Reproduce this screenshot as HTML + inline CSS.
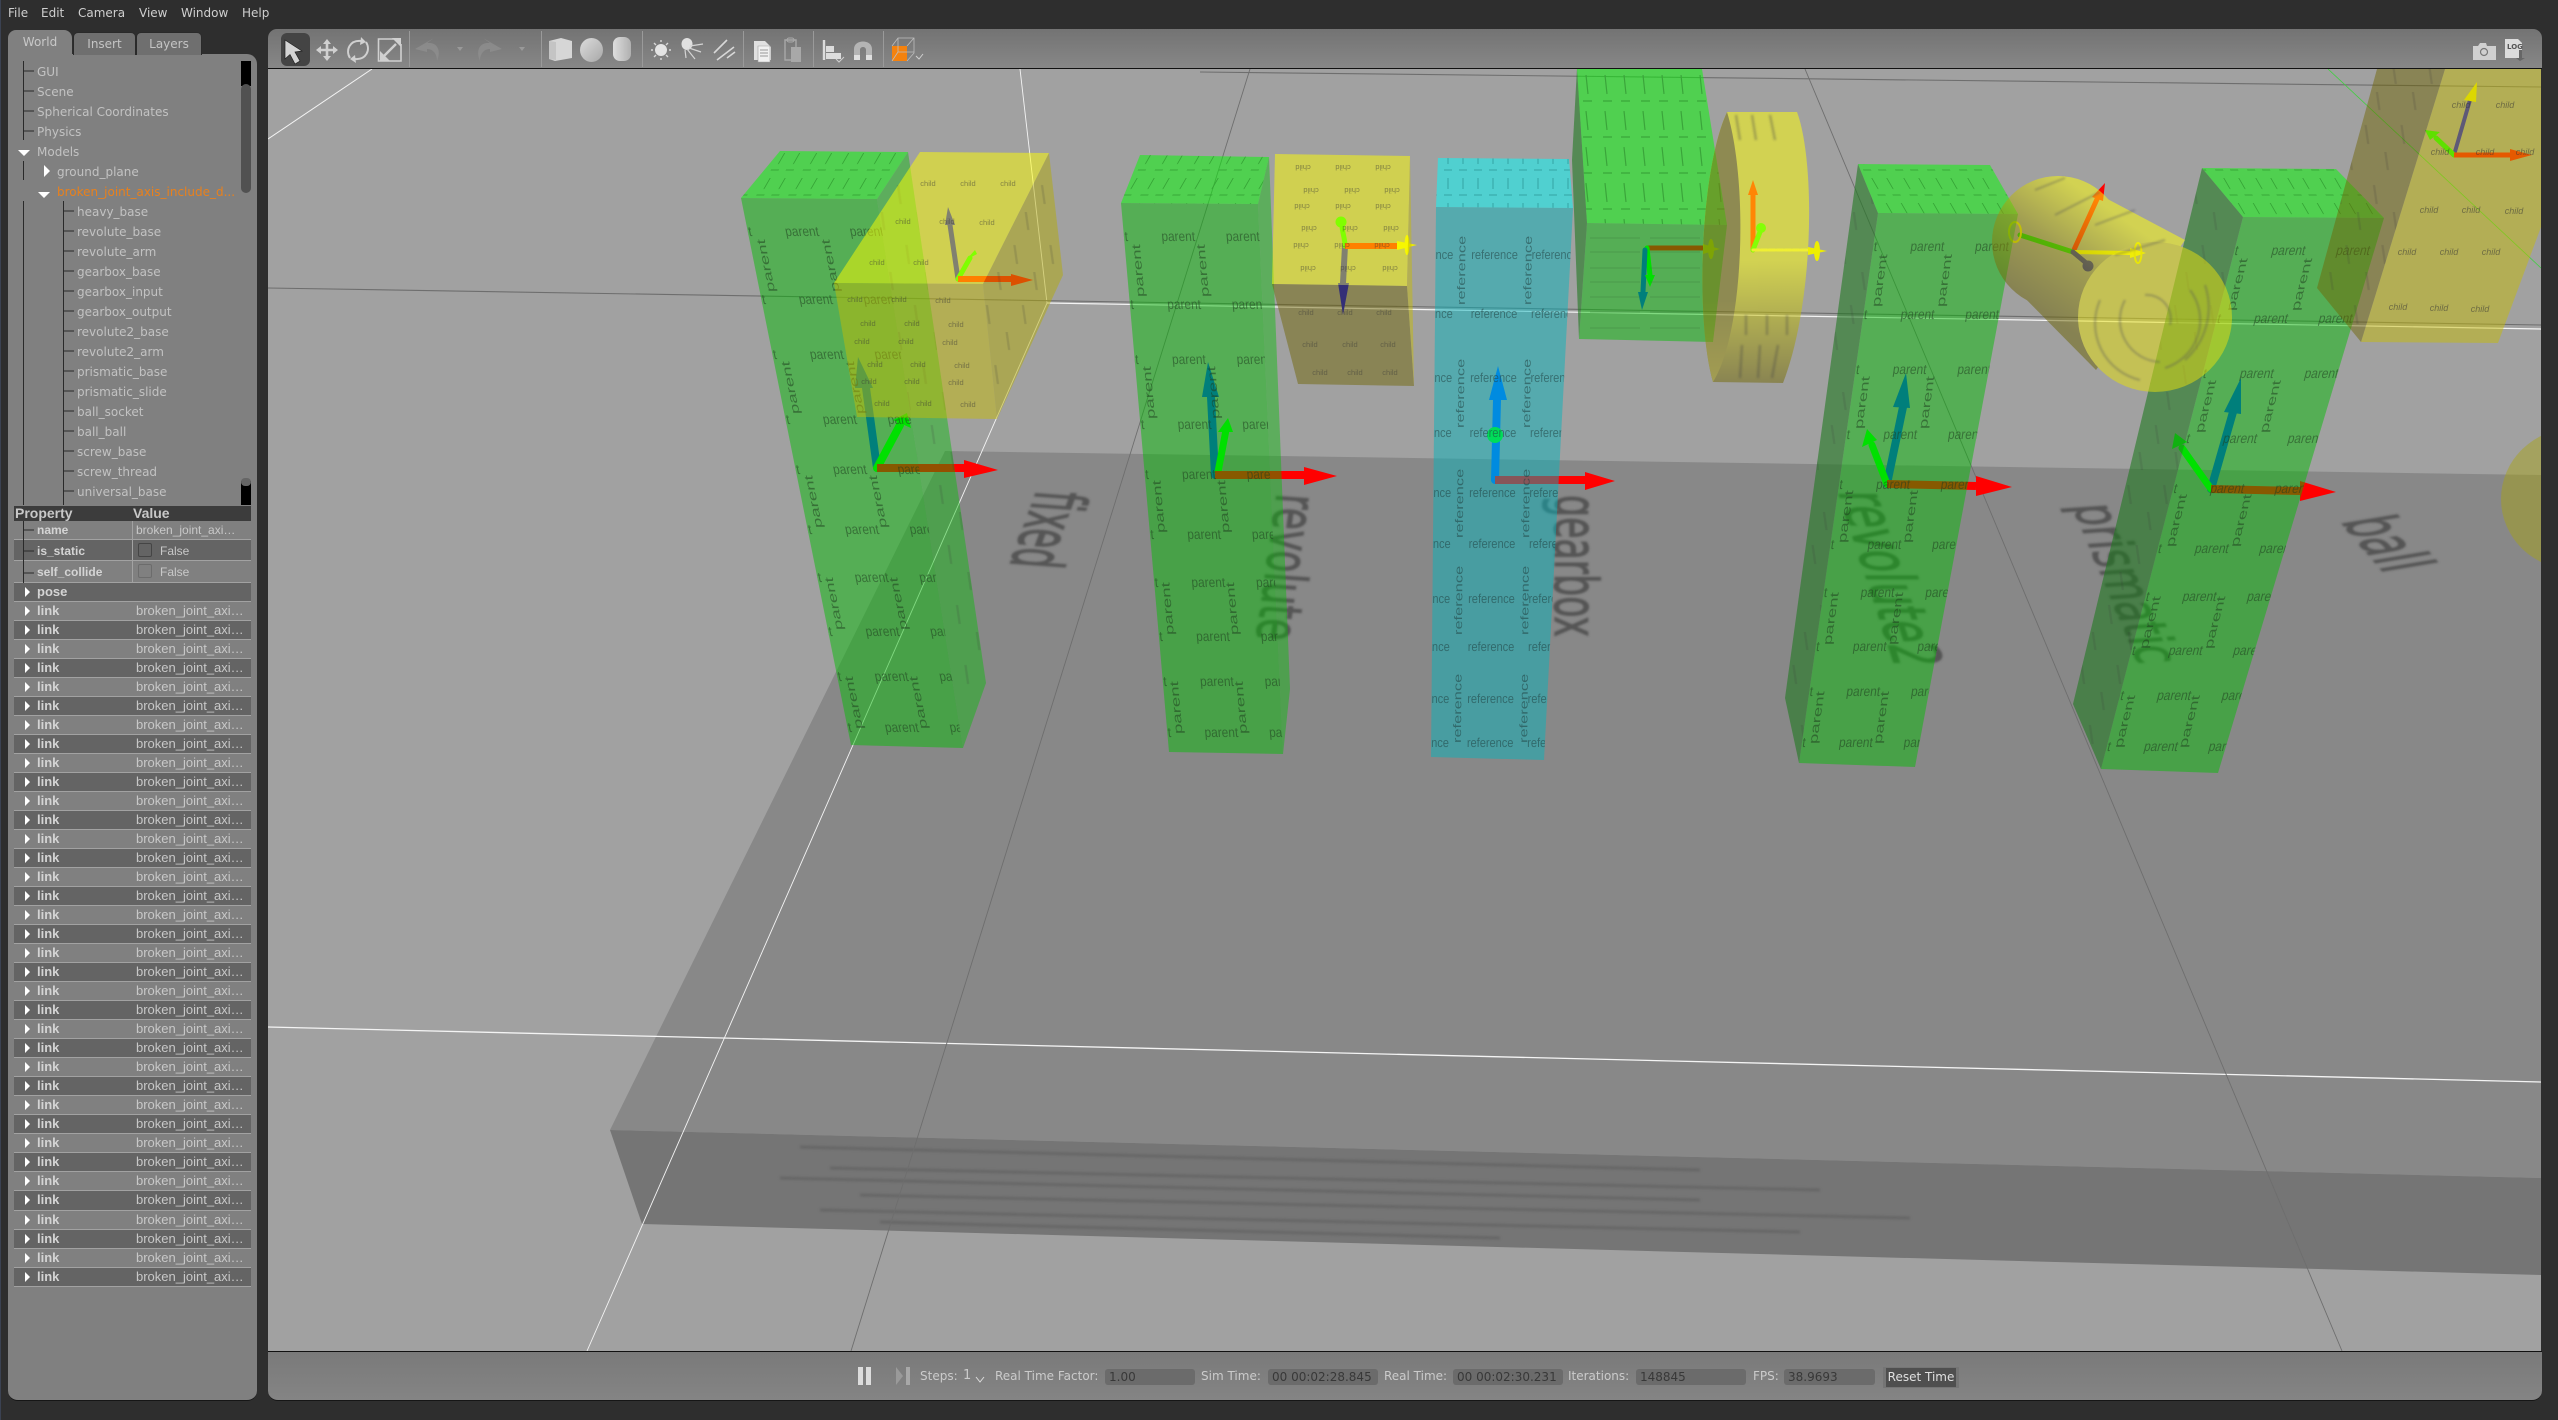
<!DOCTYPE html>
<html><head><meta charset="utf-8"><style>
html,body{margin:0;padding:0;background:#2e2e2e}
body{width:2558px;height:1420px;position:relative;overflow:hidden;font-family:"DejaVu Sans",sans-serif;font-size:12px;color:#c6c6c6}
.a{position:absolute;white-space:nowrap}
.m{top:5px;font-size:12px;color:#cfcfcf;line-height:16px}
.t{font-size:12px;line-height:16px;color:#c2c2c2;margin-top:1px}
.tab{position:absolute;top:32px;height:22px;background:#6f6f6f;border:1px solid #2a2a2a;border-bottom:none;border-radius:5px 5px 0 0;text-align:center;line-height:22px;color:#c4c4c4;font-size:12px}
.r{height:19.03px;position:relative;background:#808080;box-sizing:border-box;border-bottom:1px solid #a2a2a2;font-family:"Liberation Sans",sans-serif;font-size:13px;line-height:18px;color:#cfcfcf}
.r:nth-child(even){background:#646464}
.r b{position:absolute;left:23px;color:#d4d4d4}
.r i{position:absolute;left:122px;font-style:normal;color:#c8c8c8}
.r:before{content:"";position:absolute;left:11px;top:4px;border-left:5px solid #fff;border-top:5px solid transparent;border-bottom:5px solid transparent}
.top{position:absolute;left:14px;width:237px;box-sizing:border-box;border-bottom:1px solid #a2a2a2;font-family:"Liberation Sans",sans-serif;line-height:18px}
.top b{position:absolute;left:23px;color:#d4d4d4}
.top i{position:absolute;font-style:normal;color:#c8c8c8}
.s{font-size:12px;line-height:16px;top:1368px;color:#cbcbcb}
.b{position:absolute;top:1369px;height:16px;background:#6b6b6b;border-radius:3px;font-size:12px;line-height:16px;color:#383838;text-indent:4px}
</style></head><body>
<div class="a" style="left:0;top:0;width:1px;height:1420px;background:#3b4252"></div>
<div class="a m" style="left:8px">File</div>
<div class="a m" style="left:41px">Edit</div>
<div class="a m" style="left:78px">Camera</div>
<div class="a m" style="left:139px">View</div>
<div class="a m" style="left:181px">Window</div>
<div class="a m" style="left:242px">Help</div>

<!-- left panel -->
<div class="a" style="left:8px;top:54px;width:249px;height:1347px;background:#808080;border-radius:0 10px 10px 10px;border-bottom:1px solid #161616;box-sizing:border-box"></div>
<div class="a" style="left:8px;top:30px;width:64px;height:26px;background:#808080;border-radius:8px 8px 0 0;text-align:center;line-height:24px;color:#c8c8c8">World</div>
<div class="tab" style="left:73px;width:61px">Insert</div>
<div class="tab" style="left:136px;width:64px">Layers</div>

<svg class="a" style="left:0;top:55px" width="260" height="455" viewBox="0 55 260 455">
<g stroke="#2a2a2a" stroke-width="1" fill="none">
<path d="M23.5 61V140M23.5 71H34M23.5 91H34M23.5 111H34M23.5 131H34M23.5 161V180M23.5 201V505M63.5 201V505"/>
<path d="M63.5 211H74M63.5 231H74M63.5 251H74M63.5 271H74M63.5 291H74M63.5 311H74M63.5 331H74M63.5 351H74M63.5 371H74M63.5 391H74M63.5 411H74M63.5 431H74M63.5 451H74M63.5 471H74M63.5 491H74"/>
</g>
<path d="M18 150H30L24 156ZM38 192H50L44 198ZM44 165V177L50 171Z" fill="#fff"/>
<rect x="241" y="61" width="10" height="25" fill="#000"/>
<rect x="241" y="84" width="10" height="109" rx="5" fill="#515151"/>
<rect x="241" y="481" width="10" height="24" fill="#000"/>
<rect x="241" y="478" width="10" height="8" rx="4" fill="#666"/>
</svg>
<div class="a t" style="left:37px;top:63px">GUI</div>
<div class="a t" style="left:37px;top:83px">Scene</div>
<div class="a t" style="left:37px;top:103px">Spherical Coordinates</div>
<div class="a t" style="left:37px;top:123px">Physics</div>
<div class="a t" style="left:37px;top:143px">Models</div>
<div class="a t" style="left:57px;top:163px">ground_plane</div>
<div class="a t" style="left:57px;top:183px;color:#e8801c">broken_joint_axis_include_d...</div>
<div class="a t" style="left:77px;top:203px">heavy_base</div>
<div class="a t" style="left:77px;top:223px">revolute_base</div>
<div class="a t" style="left:77px;top:243px">revolute_arm</div>
<div class="a t" style="left:77px;top:263px">gearbox_base</div>
<div class="a t" style="left:77px;top:283px">gearbox_input</div>
<div class="a t" style="left:77px;top:303px">gearbox_output</div>
<div class="a t" style="left:77px;top:323px">revolute2_base</div>
<div class="a t" style="left:77px;top:343px">revolute2_arm</div>
<div class="a t" style="left:77px;top:363px">prismatic_base</div>
<div class="a t" style="left:77px;top:383px">prismatic_slide</div>
<div class="a t" style="left:77px;top:403px">ball_socket</div>
<div class="a t" style="left:77px;top:423px">ball_ball</div>
<div class="a t" style="left:77px;top:443px">screw_base</div>
<div class="a t" style="left:77px;top:463px">screw_thread</div>
<div class="a t" style="left:77px;top:483px">universal_base</div>

<!-- property table -->
<div class="a" style="left:14px;top:506px;width:237px;height:15px;background:#3c3c3c;font-family:'Liberation Sans',sans-serif;font-weight:bold;font-size:14px;line-height:15px;color:#c8c8c8"><span class="a" style="left:1px">Property</span><span class="a" style="left:119px">Value</span></div>
<div class="top" style="top:521px;height:19px;background:#808080"><b>name</b><i style="left:122px">broken_joint_axi…</i></div>
<div class="top" style="top:540px;height:21px;background:#646464"><b style="top:2px">is_static</b><i style="left:146px;top:2px">False</i><span class="a" style="left:124px;top:3px;width:12px;height:12px;border:1px solid #454545;border-radius:2px"></span></div>
<div class="top" style="top:561px;height:22px;background:#808080"><b style="top:2px">self_collide</b><i style="left:146px;top:2px">False</i><span class="a" style="left:124px;top:3px;width:12px;height:12px;border:1px solid #6c6c6c;border-radius:2px"></span></div>
<div class="a" style="left:132px;top:521px;width:1px;height:62px;background:#a2a2a2"></div>
<svg class="a" style="left:0;top:521px" width="40" height="62"><path d="M23.5 0V62M23.5 9H34M23.5 30H34M23.5 52H34" stroke="#2a2a2a" fill="none"/></svg>
<div class="a" style="left:14px;top:583px;width:237px;">
<div class="r" style="background:#646464"><b>pose</b></div>
</div>
<div class="a" style="left:14px;top:602px;width:237px">
<div class="r" style="background:#808080"><b>link</b><i>broken_joint_axi…</i></div>
<div class="r"><b>link</b><i>broken_joint_axi…</i></div><div class="r"><b>link</b><i>broken_joint_axi…</i></div><div class="r"><b>link</b><i>broken_joint_axi…</i></div><div class="r"><b>link</b><i>broken_joint_axi…</i></div>
<div class="r"><b>link</b><i>broken_joint_axi…</i></div><div class="r"><b>link</b><i>broken_joint_axi…</i></div><div class="r"><b>link</b><i>broken_joint_axi…</i></div><div class="r"><b>link</b><i>broken_joint_axi…</i></div><div class="r"><b>link</b><i>broken_joint_axi…</i></div>
<div class="r"><b>link</b><i>broken_joint_axi…</i></div><div class="r"><b>link</b><i>broken_joint_axi…</i></div><div class="r"><b>link</b><i>broken_joint_axi…</i></div><div class="r"><b>link</b><i>broken_joint_axi…</i></div><div class="r"><b>link</b><i>broken_joint_axi…</i></div>
<div class="r"><b>link</b><i>broken_joint_axi…</i></div><div class="r"><b>link</b><i>broken_joint_axi…</i></div><div class="r"><b>link</b><i>broken_joint_axi…</i></div><div class="r"><b>link</b><i>broken_joint_axi…</i></div><div class="r"><b>link</b><i>broken_joint_axi…</i></div>
<div class="r"><b>link</b><i>broken_joint_axi…</i></div><div class="r"><b>link</b><i>broken_joint_axi…</i></div><div class="r"><b>link</b><i>broken_joint_axi…</i></div><div class="r"><b>link</b><i>broken_joint_axi…</i></div><div class="r"><b>link</b><i>broken_joint_axi…</i></div>
<div class="r"><b>link</b><i>broken_joint_axi…</i></div><div class="r"><b>link</b><i>broken_joint_axi…</i></div><div class="r"><b>link</b><i>broken_joint_axi…</i></div><div class="r"><b>link</b><i>broken_joint_axi…</i></div><div class="r"><b>link</b><i>broken_joint_axi…</i></div>
<div class="r"><b>link</b><i>broken_joint_axi…</i></div><div class="r"><b>link</b><i>broken_joint_axi…</i></div><div class="r"><b>link</b><i>broken_joint_axi…</i></div><div class="r"><b>link</b><i>broken_joint_axi…</i></div><div class="r"><b>link</b><i>broken_joint_axi…</i></div>
<div class="r"><b>link</b><i>broken_joint_axi…</i></div>
</div>

<!-- toolbar -->
<div class="a" style="left:268px;top:29px;width:2274px;height:39px;background:linear-gradient(#737373,#878787);border-radius:9px 9px 0 0;border-bottom:1px solid #111;box-sizing:content-box"></div>
<svg class="a" style="left:268px;top:29px" width="2274" height="39" viewBox="268 29 2274 39">
<g stroke="#9a9a9a"><path d="M409.5 31V67M541.5 31V67M642.5 31V67M743.5 31V67M813.5 31V67M883.5 31V67"/></g>
<rect x="281" y="33" width="29" height="33" rx="6" fill="#444"/>
<path d="M285 40V59L290 54.5 295 64 300 61 295 52 302 51Z" fill="#d4d4d4" stroke="#222" stroke-width=".7"/>
<path d="M327 39L331 44H328.3V48.7H333V46L338 50 333 54V51.3H328.3V56H331L327 61 323 56H325.7V51.3H321V54L316 50 321 46V48.7H325.7V44H323Z" fill="#d0d0d0"/>
<g fill="none" stroke="#d0d0d0" stroke-width="2"><path d="M350 58C345 50 350 40 361 41"/><path d="M366 42C371 50 366 60 355 59"/></g>
<path d="M361 37L366 42 360 45ZM355 55L350 59 356 63Z" fill="#d0d0d0"/>
<g fill="none" stroke="#d0d0d0" stroke-width="1.6"><path d="M395 39H378.5V61H401V44"/><path d="M383 57L396 44" stroke-width="2.4"/></g>
<path d="M392 38H401V47ZM380 51V61H390Z" fill="#d0d0d0"/>
<path d="M436 39L417 50 429 53V50C436 50 439 56 439 62 444 50 438 43 429 44Z" transform="translate(-2 -1)" fill="#8f8f8f" opacity=".8"/>
<path d="M477 39L496 50 484 53V50C477 50 474 56 474 62 469 50 475 43 484 44Z" transform="translate(6 -1)" fill="#8f8f8f" opacity=".8"/>
<path d="M457 47H463L460 51ZM519 47H525L522 51Z" fill="#999"/>
<path d="M549 41L561 38 572 41V58L555 61 549 59Z" fill="#d6d6d6"/><path d="M549 41L556 42V60L549 59Z" fill="#c4c4c4"/>
<ellipse cx="591.5" cy="50" rx="11.5" ry="12" fill="url(#sp)"/>
<rect x="613" y="37" width="18" height="24" rx="7" fill="url(#cy)"/>
<circle cx="661" cy="50" r="6" fill="#e4e4e4"/>
<g stroke="#d8d8d8" stroke-width="1.4"><path d="M661 40V42M661 58V60M651 50H653M669 50H671M654 43L656 45M666 55L668 57M654 57L656 55M666 45L668 43"/></g>
<ellipse cx="687" cy="44" rx="5.5" ry="6" fill="#e0e0e0"/>
<g stroke="#d4d4d4" stroke-width="1.2"><path d="M690 46L703 44M689 48L701 52M687 49L695 59M685 50L686 58"/></g>
<g stroke="#d8d8d8" stroke-width="1.6"><path d="M714 53L727 40M717 60L734 47M727 58L735 52"/></g>
<path d="M754 41H765L771 47V60H754Z" fill="#e0e0e0"/><path d="M758 46H770V62H758Z" fill="#f0f0f0" stroke="#a0a0a0" stroke-width=".6"/><path d="M760 50H768M760 53H768M760 56H768" stroke="#999"/>
<path d="M785 40H796V60H785Z" fill="none" stroke="#a8a8a8" stroke-width="1.4"/><path d="M791 47H801V62H791Z" fill="#a8a8a8"/><rect x="787" y="38" width="7" height="4" rx="2" fill="none" stroke="#aaa"/>
<path d="M824 40V60" stroke="#dcdcdc" stroke-width="2.4"/><rect x="826" y="46" width="8" height="6" fill="#dcdcdc"/><rect x="826" y="53" width="15" height="6" fill="#dcdcdc"/>
<path d="M836 59L839 62 844 57" stroke="#d0d0d0" fill="none"/>
<path d="M854 60V49C854 39 872 39 872 49V60H866V50C866 46 860 46 860 50V60Z" fill="#b4b4b4"/><path d="M854 55H860V60H854ZM866 55H872V60H866Z" fill="#e0e0e0"/>
<rect x="892" y="46" width="15" height="15" fill="#f5820e"/>
<path d="M892 46L898 38H914V53L907 61M898 38V52L892 61M907 46L914 38M898 52H914" fill="none" stroke="#bdbdbd" stroke-width=".8"/>
<path d="M916 56L919 59 923 54" stroke="#d0d0d0" fill="none"/>
<path d="M2473 46H2478L2480 43H2486L2487 46H2496V60H2473Z" fill="#d0d0d0"/><circle cx="2484" cy="52" r="3.5" fill="none" stroke="#777" stroke-width="1.2"/>
<path d="M2505 39H2518L2522 43V58H2505Z" fill="#dcdcdc"/>
<text x="2507" y="49" font-family="'DejaVu Sans',sans-serif" font-size="7" font-weight="bold" fill="#555">LOG</text>
<path d="M2519 50V58H2516L2520 61 2525 58H2522V50Z" fill="#666"/>
</svg>

<!-- viewport -->
<svg class="a" style="left:268px;top:69px" width="2273" height="1283" viewBox="268 69 2273 1283" font-family="'Liberation Sans',sans-serif">
<defs>
<linearGradient id="sp" x1="0" y1="0" x2="1" y2="1"><stop offset="0" stop-color="#dcdcdc"/><stop offset="1" stop-color="#a8a8a8"/></linearGradient>
<linearGradient id="cy" x1="0" y1="0" x2="1" y2="0"><stop offset="0" stop-color="#dedede"/><stop offset="1" stop-color="#b0b0b0"/></linearGradient>
<linearGradient id="gc" x1="0" y1="0" x2="0" y2="1"><stop offset="0" stop-color="#ffff0a"/><stop offset=".55" stop-color="#ffff0a"/><stop offset="1" stop-color="#746a0a"/></linearGradient>
<linearGradient id="gd" x1="0" y1="0" x2="0" y2="1"><stop offset="0" stop-color="#7e760a"/><stop offset=".7" stop-color="#7e760a"/><stop offset="1" stop-color="#a49a0a"/></linearGradient>
<linearGradient id="gr" gradientUnits="userSpaceOnUse" x1="2040" y1="310" x2="2110" y2="210"><stop offset="0" stop-color="#6e660a"/><stop offset=".5" stop-color="#a09a0a"/><stop offset="1" stop-color="#ffff0a"/></linearGradient>
<pattern id="d1" width="32" height="25" patternUnits="userSpaceOnUse" patternTransform="skewX(-30)"><path d="M9 3V14M24 3V14M5 20H13M20 20H28" stroke="#36a536" stroke-width="1"/></pattern>
<pattern id="d2" width="30" height="25" patternUnits="userSpaceOnUse"><path d="M8 3V14M23 3V14M4 20H12M19 20H27" stroke="#34a5a5" stroke-width="1"/></pattern>
<pattern id="d3" width="32" height="25" patternUnits="userSpaceOnUse" patternTransform="skewX(30)"><path d="M9 3V14M24 3V14M5 20H13M20 20H28" stroke="#36a536" stroke-width="1"/></pattern>
<pattern id="d4" width="38" height="36" patternUnits="userSpaceOnUse"><path d="M9 3L11 22M28 3L30 22M7 29H16M25 29H34" stroke="#3aa53a" stroke-width="1.2"/></pattern>
<pattern id="s1" width="36" height="60" patternUnits="userSpaceOnUse" patternTransform="skewX(8)"><path d="M8 5V24M24 32V50" stroke="#333" stroke-width="2.4" opacity=".16"/></pattern>
<clipPath id="c1"><path d="M741 198L877 199 963 748 851 745Z"/></clipPath>
<clipPath id="c2"><path d="M1121 203L1258 204 1283 754 1169 752Z"/></clipPath>
<clipPath id="c3"><path d="M1436 207L1573 208 1544 760 1431 757Z"/></clipPath>
<clipPath id="c4"><path d="M1878 213L2018 214 1915 767 1799 763Z"/></clipPath>
<clipPath id="c5"><path d="M2243 217L2384 218 2218 773 2101 769Z"/></clipPath>
<filter id="bl"><feGaussianBlur stdDeviation="1"/></filter>
<filter id="bl2"><feGaussianBlur stdDeviation="1.2"/></filter>
</defs>
<rect x="268" y="69" width="2273" height="1283" fill="#a1a1a1"/>
<path d="M945 451L2541 475V1178L610 1130Z" fill="#888"/>
<path d="M610 1130L2541 1178V1275L642 1224Z" fill="#757575"/>
<g stroke="#4a4a4a" stroke-width="2.4" opacity=".4" filter="url(#bl2)"><path d="M800 1147L1700 1170M830 1168L1820 1190M780 1178L1700 1200M860 1195L1910 1218M820 1210L1800 1232M880 1222L1500 1238"/></g>
<g fill="none" stroke="#f4f4f4">
<path d="M268 1027L2541 1082" stroke-width="1.3"/><path d="M587 1351L1047 303L1020 69" stroke-width=".9"/><path d="M1047 303L2541 329" stroke-width="1.2"/><path d="M268 139L372 69" stroke-width="1"/>
</g>
<g fill="none" stroke="#6e6e6e" stroke-width=".9">
<path d="M268 288L2541 325" stroke-width="1.1"/><path d="M1200 72L2541 87" stroke-width="1.1"/>
<path d="M851 1351L1250 69"/><path d="M1805 69L2342 1351"/>
</g>
<path d="M2328 69L2541 268" stroke="#3fd03f" stroke-width=".8" fill="none"/>
<g font-family="'DejaVu Sans',sans-serif" font-size="40" fill="#555" stroke="#555" stroke-width=".8" filter="url(#bl)">
<text transform="matrix(-.283 .78 -1.8 -.13 1037 490)">fixed</text>
<text transform="matrix(-.126 .886 -1.45 -.1 1277 493)">revolute</text>
<text transform="matrix(0 .87 -1.5 0 1555 495)">gearbox</text>
<text transform="matrix(.3 .92 -1.7 0 1838 491)">revolute2</text>
<text transform="matrix(.36 .86 -1.5 .1 2072 505)">prismatic</text>
<text transform="matrix(.625 .736 -1.8 .3 2340 521)">ball</text>
</g>

<!-- axes -->
<g fill="none" stroke-linecap="round">
<path d="M877 468L866 388" stroke="#0048e8" stroke-width="8"/><path d="M877 468L900 425" stroke="#00ff00" stroke-width="8"/><path d="M877 468H965" stroke="#f00" stroke-width="8" stroke-linecap="butt"/>
<path d="M1215 475L1211 397" stroke="#0048e8" stroke-width="8"/><path d="M1218 472L1226 430" stroke="#00ff00" stroke-width="7"/><path d="M1215 475H1305" stroke="#f00" stroke-width="8" stroke-linecap="butt"/>
<path d="M1495 480L1497 400" stroke="#0066ff" stroke-width="8"/><path d="M1495 480H1585" stroke="#f00" stroke-width="8" stroke-linecap="butt"/>
<path d="M1887 484L1903 407" stroke="#0048e8" stroke-width="8"/><path d="M1887 484L1872 445" stroke="#00ff00" stroke-width="7"/><path d="M1887 484L1976 486" stroke="#f00" stroke-width="8" stroke-linecap="butt"/>
<path d="M2211 489L2233 412" stroke="#0048e8" stroke-width="8"/><path d="M2211 489L2182 448" stroke="#00ff00" stroke-width="7"/><path d="M2211 489L2300 491" stroke="#f00" stroke-width="8" stroke-linecap="butt"/>
<path d="M958 279L950 225" stroke="#0000e0" stroke-width="5"/><path d="M958 279L970 258" stroke="#00ff00" stroke-width="5"/><path d="M958 279H1015" stroke="#f00" stroke-width="6" stroke-linecap="butt"/>
<path d="M1345 246L1343 283" stroke="#0000e0" stroke-width="6"/><path d="M1345 246C1345 238 1342 232 1342 225" stroke="#00ff00" stroke-width="5"/><path d="M1345 246H1398" stroke="#f00" stroke-width="6" stroke-linecap="butt"/>
<path d="M1753 250V195" stroke="#f00" stroke-width="5"/><path d="M1753 250L1760 232" stroke="#00ff00" stroke-width="5"/><path d="M1753 250H1810" stroke="#dddd60" stroke-width="3" stroke-dasharray="6 2"/>
<path d="M1647 248H1703" stroke="#f00" stroke-width="5" stroke-linecap="butt"/><path d="M1647 248L1650 275" stroke="#00ff00" stroke-width="5"/><path d="M1645 250L1643 292" stroke="#0048e8" stroke-width="5"/>
<path d="M2073 252L2098 197" stroke="#f00" stroke-width="5"/><path d="M2073 252L2130 253" stroke="#ff0" stroke-width="4"/><path d="M2073 252L2020 235" stroke="#00d000" stroke-width="5"/><path d="M2073 252L2085 262" stroke="#1a1aa0" stroke-width="5"/>
<path d="M2454 155L2470 100" stroke="#0000e0" stroke-width="4"/><path d="M2454 155L2436 138" stroke="#00ff00" stroke-width="5"/><path d="M2454 155H2515" stroke="#f00" stroke-width="5" stroke-linecap="butt"/>
</g>
<g>
<path d="M964 460L998 470 964 478Z" fill="#f00"/><path d="M855 388H873L858 357Z" fill="#0048e8"/><path d="M893 420L911 428 907 413Z" fill="#0f0"/>
<path d="M1304 467L1337 476 1304 485Z" fill="#f00"/><path d="M1202 397H1219L1208 362Z" fill="#0048e8"/><path d="M1218 432L1233 432 1228 418Z" fill="#0f0"/>
<path d="M1585 472L1615 481 1585 490Z" fill="#f00"/><path d="M1489 400H1507L1498 366Z" fill="#0066ff"/><circle cx="1495" cy="435" r="8" fill="#0f0"/>
<path d="M1976 476L2012 487 1976 496Z" fill="#f00"/><path d="M1893 407L1910 408 1906 373Z" fill="#0048e8"/><path d="M1862 447L1877 440 1867 429Z" fill="#0f0"/>
<path d="M2300 481L2336 492 2300 501Z" fill="#f00"/><path d="M2224 412L2241 414 2241 378Z" fill="#0048e8"/><path d="M2172 449L2187 442 2175 433Z" fill="#0f0"/>
<path d="M1011 274L1033 280 1011 286Z" fill="#f00"/><path d="M945 225H955L948 207Z" fill="#0000e0"/><path d="M966 260L977 254 975 250Z" fill="#0f0"/>
<path d="M1397 241L1417 245 1397 250Z" fill="#ee0"/><ellipse cx="1407" cy="245" rx="2.5" ry="10" fill="#ee0"/><path d="M1338 283H1349L1343 315Z" fill="#0000e0"/><circle cx="1341" cy="222" r="5.5" fill="#0f0"/>
<path d="M1748 195H1758L1753 180Z" fill="#f00"/><circle cx="1761" cy="228" r="5" fill="#0f0"/><path d="M1808 247L1827 251 1808 255Z" fill="#ee0"/><ellipse cx="1817" cy="251" rx="3" ry="10" fill="#ee0"/>
<path d="M1703 244V254L1720 249Z" fill="#ee0"/><ellipse cx="1711" cy="249" rx="3" ry="10" fill="#ee0"/><path d="M1645 275H1655L1650 287Z" fill="#0f0"/><path d="M1638 292H1648L1642 310Z" fill="#0048e8"/>
<path d="M2092 197L2103 201 2105 183Z" fill="#f00"/><path d="M2130 248V258L2146 253Z" fill="#ff0"/><ellipse cx="2138" cy="253" rx="3.5" ry="10" fill="none" stroke="#ee0" stroke-width="2"/><ellipse cx="2015" cy="232" rx="6" ry="10" fill="none" stroke="#ee0" stroke-width="2"/><circle cx="2088" cy="266" r="5.5" fill="#1a1aa0"/>
<path d="M2510 149L2532 155 2510 161Z" fill="#f00"/><path d="M2464 100L2476 102 2477 82Z" fill="#ee0"/><path d="M2430 140L2440 132 2425 130Z" fill="#0f0"/>
</g>

<!-- green columns -->
<g fill="#00be00" fill-opacity=".47">
<path d="M741 198L877 199 963 748 851 745Z"/><path d="M877 199L908 152 986 683 963 748Z" fill-opacity=".42"/>
<path d="M1121 203L1258 204 1283 754 1169 752Z"/><path d="M1258 204L1269 157 1290 689 1283 754Z" fill-opacity=".42"/>
<path d="M1878 213L2018 214 1915 767 1799 763Z"/>
<path d="M2243 217L2384 218 2218 773 2101 769Z"/>
<path d="M1587 223L1727 225 1713 342 1579 339Z"/>
</g>
<g fill="#1e781e" fill-opacity=".58">
<path d="M1858 164L1878 213 1799 763 1785 698Z"/>
<path d="M2202 168L2243 217 2101 769 2073 704Z"/>
<path d="M1572 160L1577 68 1587 223 1579 339Z"/>
</g>
<g fill="#0f0" fill-opacity=".5">
<path d="M741 198L780 151 908 152 877 199Z"/><path d="M1121 203L1140 155 1269 157 1258 204Z"/>
<path d="M1878 213L1858 164 1990 165 2018 214Z"/><path d="M2243 217L2202 168 2336 169 2384 218Z"/>
<path d="M1587 223L1577 69H1702L1727 225Z"/>
</g>
<path d="M741 198L780 151 908 152 877 199Z" fill="url(#d1)"/><path d="M1121 203L1140 155 1269 157 1258 204Z" fill="url(#d1)"/>
<path d="M1878 213L1858 164 1990 165 2018 214Z" fill="url(#d3)"/><path d="M2243 217L2202 168 2336 169 2384 218Z" fill="url(#d3)"/>
<path d="M1587 223L1577 69H1702L1727 225Z" fill="url(#d4)"/>
<path d="M1858 164L1878 213 1799 763 1785 698Z" fill="url(#s1)"/><path d="M2202 168L2243 217 2101 769 2073 704Z" fill="url(#s1)"/><path d="M877 199L908 152 986 683 963 748Z" fill="url(#s1)"/>
<path d="M1436 207L1573 208 1544 760 1431 757Z" fill="#00b4be" fill-opacity=".47"/>
<path d="M1436 207L1438 158 1569 159 1573 208Z" fill="#0ff" fill-opacity=".5"/>
<path d="M1436 207L1438 158 1569 159 1573 208Z" fill="url(#d2)"/>
<g stroke="#3a7f3a" stroke-width="1" opacity=".4"><path d="M1590 238H1640M1590 252H1640M1590 268H1640M1590 282H1640M1590 297H1640M1590 312H1640M1590 328H1640M1650 238H1700M1650 252H1700M1650 268H1700M1650 282H1700M1650 297H1700M1650 312H1700M1650 328H1700"/></g>

<!-- parent text -->
<g font-size="14" fill="#1f3f1f" fill-opacity=".55">
<g clip-path="url(#c1)"><g transform="matrix(.85 0 .201 1 741 198)">
<text y="38"><tspan x="-35">parent</tspan><tspan x="44">parent</tspan><tspan x="120">parent</tspan></text><text y="106"><tspan x="-35">parent</tspan><tspan x="44">parent</tspan><tspan x="120">parent</tspan></text><text y="161"><tspan x="-35">parent</tspan><tspan x="44">parent</tspan><tspan x="120">parent</tspan></text><text y="226"><tspan x="-35">parent</tspan><tspan x="44">parent</tspan><tspan x="120">parent</tspan></text><text y="276"><tspan x="-35">parent</tspan><tspan x="44">parent</tspan><tspan x="120">parent</tspan></text><text y="336"><tspan x="-35">parent</tspan><tspan x="44">parent</tspan><tspan x="120">parent</tspan></text><text y="384"><tspan x="-35">parent</tspan><tspan x="44">parent</tspan><tspan x="120">parent</tspan></text><text y="438"><tspan x="-35">parent</tspan><tspan x="44">parent</tspan><tspan x="120">parent</tspan></text><text y="483"><tspan x="-35">parent</tspan><tspan x="44">parent</tspan><tspan x="120">parent</tspan></text><text y="534"><tspan x="-35">parent</tspan><tspan x="44">parent</tspan><tspan x="120">parent</tspan></text>
<text transform="matrix(0 -1.33 1 0 18 94)">parent</text><text transform="matrix(0 -1.33 1 0 94 94)">parent</text><text transform="matrix(0 -1.33 1 0 18 216)">parent</text><text transform="matrix(0 -1.33 1 0 94 216)">parent</text><text transform="matrix(0 -1.33 1 0 18 330)">parent</text><text transform="matrix(0 -1.33 1 0 94 330)">parent</text><text transform="matrix(0 -1.33 1 0 18 432)">parent</text><text transform="matrix(0 -1.33 1 0 94 432)">parent</text><text transform="matrix(0 -1.33 1 0 18 531)">parent</text><text transform="matrix(0 -1.33 1 0 94 531)">parent</text>
</g></g>
<g clip-path="url(#c2)"><g transform="matrix(.85 0 .087 1 1121 203)">
<text y="38"><tspan x="-35">parent</tspan><tspan x="44">parent</tspan><tspan x="120">parent</tspan></text><text y="106"><tspan x="-35">parent</tspan><tspan x="44">parent</tspan><tspan x="120">parent</tspan></text><text y="161"><tspan x="-35">parent</tspan><tspan x="44">parent</tspan><tspan x="120">parent</tspan></text><text y="226"><tspan x="-35">parent</tspan><tspan x="44">parent</tspan><tspan x="120">parent</tspan></text><text y="276"><tspan x="-35">parent</tspan><tspan x="44">parent</tspan><tspan x="120">parent</tspan></text><text y="336"><tspan x="-35">parent</tspan><tspan x="44">parent</tspan><tspan x="120">parent</tspan></text><text y="384"><tspan x="-35">parent</tspan><tspan x="44">parent</tspan><tspan x="120">parent</tspan></text><text y="438"><tspan x="-35">parent</tspan><tspan x="44">parent</tspan><tspan x="120">parent</tspan></text><text y="483"><tspan x="-35">parent</tspan><tspan x="44">parent</tspan><tspan x="120">parent</tspan></text><text y="534"><tspan x="-35">parent</tspan><tspan x="44">parent</tspan><tspan x="120">parent</tspan></text>
<text transform="matrix(0 -1.33 1 0 18 94)">parent</text><text transform="matrix(0 -1.33 1 0 94 94)">parent</text><text transform="matrix(0 -1.33 1 0 18 216)">parent</text><text transform="matrix(0 -1.33 1 0 94 216)">parent</text><text transform="matrix(0 -1.33 1 0 18 330)">parent</text><text transform="matrix(0 -1.33 1 0 94 330)">parent</text><text transform="matrix(0 -1.33 1 0 18 432)">parent</text><text transform="matrix(0 -1.33 1 0 94 432)">parent</text><text transform="matrix(0 -1.33 1 0 18 531)">parent</text><text transform="matrix(0 -1.33 1 0 94 531)">parent</text>
</g></g>
<g clip-path="url(#c4)"><g transform="matrix(.85 0 -.144 1 1878 213)">
<text y="38"><tspan x="-35">parent</tspan><tspan x="44">parent</tspan><tspan x="120">parent</tspan></text><text y="106"><tspan x="-35">parent</tspan><tspan x="44">parent</tspan><tspan x="120">parent</tspan></text><text y="161"><tspan x="-35">parent</tspan><tspan x="44">parent</tspan><tspan x="120">parent</tspan></text><text y="226"><tspan x="-35">parent</tspan><tspan x="44">parent</tspan><tspan x="120">parent</tspan></text><text y="276"><tspan x="-35">parent</tspan><tspan x="44">parent</tspan><tspan x="120">parent</tspan></text><text y="336"><tspan x="-35">parent</tspan><tspan x="44">parent</tspan><tspan x="120">parent</tspan></text><text y="384"><tspan x="-35">parent</tspan><tspan x="44">parent</tspan><tspan x="120">parent</tspan></text><text y="438"><tspan x="-35">parent</tspan><tspan x="44">parent</tspan><tspan x="120">parent</tspan></text><text y="483"><tspan x="-35">parent</tspan><tspan x="44">parent</tspan><tspan x="120">parent</tspan></text><text y="534"><tspan x="-35">parent</tspan><tspan x="44">parent</tspan><tspan x="120">parent</tspan></text>
<text transform="matrix(0 -1.33 1 0 18 94)">parent</text><text transform="matrix(0 -1.33 1 0 94 94)">parent</text><text transform="matrix(0 -1.33 1 0 18 216)">parent</text><text transform="matrix(0 -1.33 1 0 94 216)">parent</text><text transform="matrix(0 -1.33 1 0 18 330)">parent</text><text transform="matrix(0 -1.33 1 0 94 330)">parent</text><text transform="matrix(0 -1.33 1 0 18 432)">parent</text><text transform="matrix(0 -1.33 1 0 94 432)">parent</text><text transform="matrix(0 -1.33 1 0 18 531)">parent</text><text transform="matrix(0 -1.33 1 0 94 531)">parent</text>
</g></g>
<g clip-path="url(#c5)"><g transform="matrix(.85 0 -.257 1 2243 217)">
<text y="38"><tspan x="-35">parent</tspan><tspan x="44">parent</tspan><tspan x="120">parent</tspan></text><text y="106"><tspan x="-35">parent</tspan><tspan x="44">parent</tspan><tspan x="120">parent</tspan></text><text y="161"><tspan x="-35">parent</tspan><tspan x="44">parent</tspan><tspan x="120">parent</tspan></text><text y="226"><tspan x="-35">parent</tspan><tspan x="44">parent</tspan><tspan x="120">parent</tspan></text><text y="276"><tspan x="-35">parent</tspan><tspan x="44">parent</tspan><tspan x="120">parent</tspan></text><text y="336"><tspan x="-35">parent</tspan><tspan x="44">parent</tspan><tspan x="120">parent</tspan></text><text y="384"><tspan x="-35">parent</tspan><tspan x="44">parent</tspan><tspan x="120">parent</tspan></text><text y="438"><tspan x="-35">parent</tspan><tspan x="44">parent</tspan><tspan x="120">parent</tspan></text><text y="483"><tspan x="-35">parent</tspan><tspan x="44">parent</tspan><tspan x="120">parent</tspan></text><text y="534"><tspan x="-35">parent</tspan><tspan x="44">parent</tspan><tspan x="120">parent</tspan></text>
<text transform="matrix(0 -1.33 1 0 18 94)">parent</text><text transform="matrix(0 -1.33 1 0 94 94)">parent</text><text transform="matrix(0 -1.33 1 0 18 216)">parent</text><text transform="matrix(0 -1.33 1 0 94 216)">parent</text><text transform="matrix(0 -1.33 1 0 18 330)">parent</text><text transform="matrix(0 -1.33 1 0 94 330)">parent</text><text transform="matrix(0 -1.33 1 0 18 432)">parent</text><text transform="matrix(0 -1.33 1 0 94 432)">parent</text><text transform="matrix(0 -1.33 1 0 18 531)">parent</text><text transform="matrix(0 -1.33 1 0 94 531)">parent</text>
</g></g>
</g>
<!-- reference text -->
<g font-size="13" fill="#1f3f3f" fill-opacity=".55" clip-path="url(#c3)"><g transform="matrix(.85 0 -.009 1 1436 207)">
<text y="52"><tspan x="-34">reference</tspan><tspan x="42">reference</tspan><tspan x="113">reference</tspan></text><text y="111"><tspan x="-34">reference</tspan><tspan x="42">reference</tspan><tspan x="113">reference</tspan></text><text y="175"><tspan x="-34">reference</tspan><tspan x="42">reference</tspan><tspan x="113">reference</tspan></text><text y="230"><tspan x="-34">reference</tspan><tspan x="42">reference</tspan><tspan x="113">reference</tspan></text><text y="290"><tspan x="-34">reference</tspan><tspan x="42">reference</tspan><tspan x="113">reference</tspan></text><text y="341"><tspan x="-34">reference</tspan><tspan x="42">reference</tspan><tspan x="113">reference</tspan></text><text y="396"><tspan x="-34">reference</tspan><tspan x="42">reference</tspan><tspan x="113">reference</tspan></text><text y="444"><tspan x="-34">reference</tspan><tspan x="42">reference</tspan><tspan x="113">reference</tspan></text><text y="496"><tspan x="-34">reference</tspan><tspan x="42">reference</tspan><tspan x="113">reference</tspan></text><text y="540"><tspan x="-34">reference</tspan><tspan x="42">reference</tspan><tspan x="113">reference</tspan></text>
<text transform="matrix(0 -1.26 1 0 35 98)">reference</text><text transform="matrix(0 -1.26 1 0 113 98)">reference</text><text transform="matrix(0 -1.26 1 0 35 221)">reference</text><text transform="matrix(0 -1.26 1 0 113 221)">reference</text><text transform="matrix(0 -1.26 1 0 35 331)">reference</text><text transform="matrix(0 -1.26 1 0 113 331)">reference</text><text transform="matrix(0 -1.26 1 0 35 428)">reference</text><text transform="matrix(0 -1.26 1 0 113 428)">reference</text><text transform="matrix(0 -1.26 1 0 35 536)">reference</text><text transform="matrix(0 -1.26 1 0 113 536)">reference</text>
</g></g>

<!-- fixed child -->
<path d="M834 283L920 152 1049 153 983 284Z" fill="#ff0" fill-opacity=".5"/>
<path d="M834 283L983 284 997 419 857 417Z" fill="#c8be00" fill-opacity=".47"/>
<path d="M983 284L1049 153 1063 275 997 419Z" fill="#b4ac00" fill-opacity=".47"/>
<path d="M983 284L1049 153 1063 275 997 419Z" fill="url(#s1)"/>
<g font-size="7.5" fill="#333" fill-opacity=".5" text-anchor="middle">
<text x="855" y="302">child</text><text x="899" y="302">child</text><text x="943" y="303">child</text>
<text x="868" y="326">child</text><text x="912" y="326">child</text><text x="956" y="327">child</text>
<text x="862" y="344">child</text><text x="906" y="344">child</text><text x="950" y="345">child</text>
<text x="875" y="367">child</text><text x="918" y="367">child</text><text x="962" y="368">child</text>
<text x="869" y="384">child</text><text x="912" y="384">child</text><text x="956" y="385">child</text>
<text x="882" y="406">child</text><text x="924" y="406">child</text><text x="968" y="407">child</text>
<text x="928" y="186">child</text><text x="968" y="186">child</text><text x="1008" y="186">child</text>
<text x="903" y="224">child</text><text x="947" y="224">child</text><text x="987" y="225">child</text>
<text x="877" y="265">child</text><text x="921" y="265">child</text>
</g>
<!-- revolute child -->
<path d="M1272 284L1275 154 1410 156 1407 286Z" fill="#ff0" fill-opacity=".5"/>
<path d="M1272 284L1407 286 1414 386 1298 384Z" fill="#6e6400" fill-opacity=".47"/>
<path d="M1407 286L1410 156 1414 386Z" fill="#c8be00" fill-opacity=".47"/>
<g font-size="7.5" fill="#333" fill-opacity=".5" text-anchor="middle" transform="rotate(180)">
<text x="-1303" y="-165">child</text><text x="-1343" y="-165">child</text><text x="-1383" y="-165">child</text>
<text x="-1311" y="-188">child</text><text x="-1352" y="-188">child</text><text x="-1392" y="-188">child</text>
<text x="-1302" y="-204">child</text><text x="-1343" y="-204">child</text><text x="-1383" y="-204">child</text>
<text x="-1309" y="-226">child</text><text x="-1350" y="-226">child</text><text x="-1391" y="-226">child</text>
<text x="-1301" y="-243">child</text><text x="-1342" y="-243">child</text><text x="-1382" y="-243">child</text>
<text x="-1308" y="-266">child</text><text x="-1348" y="-266">child</text><text x="-1390" y="-266">child</text>
</g>
<g font-size="7.5" fill="#333" fill-opacity=".45" text-anchor="middle">
<text x="1306" y="315">child</text><text x="1345" y="315">child</text><text x="1384" y="315">child</text>
<text x="1310" y="347">child</text><text x="1350" y="347">child</text><text x="1388" y="347">child</text>
<text x="1320" y="375">child</text><text x="1355" y="375">child</text><text x="1390" y="375">child</text>
</g>

<!-- gearbox cylinder -->
<g opacity=".52">
<path d="M1727 112L1797 112C1815 160 1815 300 1783 383L1713 382C1695 320 1700 170 1727 112Z" fill="url(#gc)"/>
<path d="M1727 112C1700 170 1695 320 1713 382C1745 330 1748 180 1727 112Z" fill="url(#gd)"/>
</g>
<!-- big cylinder -->
<g opacity=".52">
<ellipse cx="2058" cy="242" rx="66" ry="66" fill="url(#gr)"/>
<path d="M2064 176L2185 240 2096 370 2007 280Z" fill="url(#gr)"/>
<ellipse cx="2155" cy="317" rx="77" ry="75" fill="#e4de10"/>
</g>
<g fill="none" stroke="#555" stroke-width="2" opacity=".4" filter="url(#bl)">
<path d="M2145 295A24 24 0 0 1 2170 325M2125 300A42 42 0 0 0 2160 362M2190 290A50 50 0 0 1 2165 368M2100 300A58 58 0 0 0 2140 380M2205 285A70 70 0 0 1 2185 360"/>
<path d="M2035 190L2065 178M2055 215L2100 192M2095 225L2135 210M2115 255L2165 240"/>
</g>
<g fill="none" stroke="#444" stroke-width="2.4" opacity=".35" filter="url(#bl)">
<path d="M1736 115L1740 140M1752 115L1756 140M1770 115L1775 140M1742 345L1740 378M1760 345L1758 378M1778 345L1772 378"/>
<path d="M1746 315V335M1767 315V335M1787 315V335"/>
</g>
<!-- prismatic child -->
<path d="M2445 69H2541V227L2498 343 2361 342Z" fill="#c8be00" fill-opacity=".47"/>
<path d="M2377 69H2445L2361 342 2317 288Z" fill="#6e6400" fill-opacity=".47"/>
<path d="M2377 69H2445L2361 342 2317 288Z" fill="url(#s1)"/>
<g font-size="9" font-style="italic" fill="#333" fill-opacity=".55" text-anchor="middle">
<text x="2461" y="108">child</text><text x="2505" y="108">child</text><text x="2429" y="213">child</text><text x="2471" y="213">child</text><text x="2514" y="214">child</text>
<text x="2407" y="255">child</text><text x="2449" y="255">child</text><text x="2491" y="255">child</text><text x="2398" y="310">child</text><text x="2439" y="311">child</text><text x="2480" y="312">child</text>
<text x="2440" y="155">child</text><text x="2485" y="155">child</text><text x="2525" y="155">child</text>
</g>
<!-- ball -->
<ellipse cx="2575" cy="499" rx="74" ry="71" fill="#a8a410" fill-opacity=".45"/>
</svg>

<!-- status bar -->
<div class="a" style="left:268px;top:1351px;width:2274px;height:50px;background:linear-gradient(#7a7a7a,#848484);border-top:1px solid #111;border-radius:0 0 10px 10px;border-bottom:1px solid #161616;box-sizing:border-box"></div>
<svg class="a" style="left:850px;top:1360px" width="70" height="30"><rect x="8" y="7" width="5" height="18" fill="#dcdcdc"/><rect x="16" y="7" width="5" height="18" fill="#dcdcdc"/><path d="M46 7L53 16 46 25Z" fill="#9a9a9a"/><rect x="56" y="7" width="4" height="18" fill="#a8a8a8"/></svg>
<div class="a s" style="left:920px">Steps:</div>
<div class="a s" style="left:963px;font-size:13px">1</div>
<svg class="a" style="left:975px;top:1374px" width="10" height="10"><path d="M1 3L5 8 9 3" stroke="#ddd" fill="none"/></svg>
<div class="a s" style="left:995px">Real Time Factor:</div><div class="b" style="left:1105px;width:90px">1.00</div>
<div class="a s" style="left:1201px">Sim Time:</div><div class="b" style="left:1268px;width:110px">00 00:02:28.845</div>
<div class="a s" style="left:1384px">Real Time:</div><div class="b" style="left:1453px;width:110px">00 00:02:30.231</div>
<div class="a s" style="left:1568px">Iterations:</div><div class="b" style="left:1636px;width:110px">148845</div>
<div class="a s" style="left:1753px">FPS:</div><div class="b" style="left:1784px;width:91px">38.9693</div>
<div class="a" style="left:1883px;top:1367px;width:76px;height:21px;background:#757575"></div>
<div class="a" style="left:1886px;top:1368px;width:70px;height:19px;background:#4f4f4f;color:#e0e0e0;font-size:12px;line-height:19px;text-align:center">Reset Time</div>
</body></html>
